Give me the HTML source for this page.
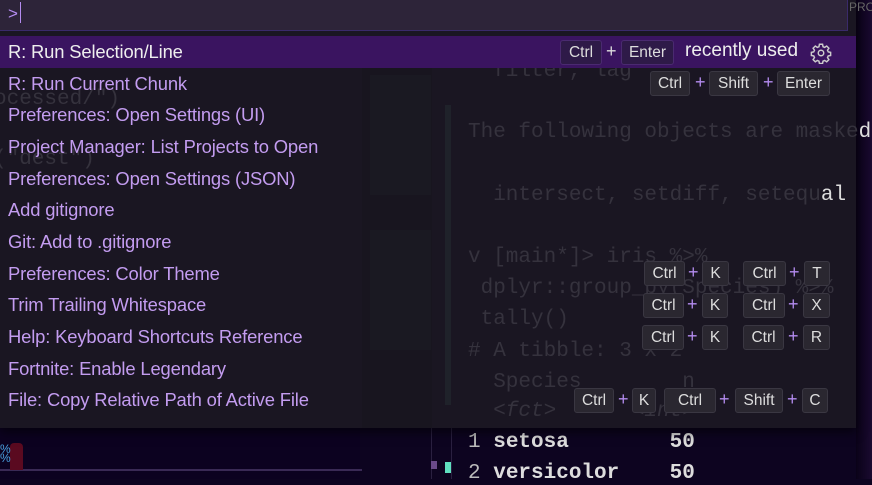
<!DOCTYPE html>
<html><head><meta charset="utf-8"><style>
*{margin:0;padding:0;box-sizing:border-box}
body{width:872px;height:479px;overflow:hidden;background:#0d0420;font-family:"Liberation Sans",sans-serif;position:relative}
.abs{position:absolute}
.pal{position:absolute;left:0;top:0;width:856px;height:428px;background:#1a1622;box-shadow:0 4px 10px rgba(0,0,0,.6)}
.input{position:absolute;left:0;top:0;width:848px;height:31px;background:#2d2439;border-bottom:1px solid #3a2a6a;border-right:1px solid #3a2a6a}
.row{position:absolute;left:8px;font-size:18.4px;color:#c39cf0;white-space:nowrap;letter-spacing:-0.15px}
.sel{position:absolute;left:0;top:36px;width:856px;height:32px;background:#3a1460}
.code{position:absolute;font-family:"Liberation Mono",monospace;font-size:21px;color:#35323d;white-space:pre}
.k{position:absolute;height:25px;background:#2a2730;border:1px solid #3a3742;border-radius:3px;color:#ddd;font-size:15.5px;line-height:23px;text-align:center}
.p{position:absolute;color:#b48cf0;font-size:18px}
.mm{position:absolute;background:#2a3a3a}
</style></head><body>
<div class="abs" style="left:0;top:428px;width:360px;height:51px;background:#0c0220"></div>
<div class="abs" style="left:0;top:469px;width:362px;height:2px;background:#3a2a55"></div>
<div class="abs" style="left:10px;top:443px;width:13px;height:27px;background:#5a0a20;border-radius:4px 4px 0 0"></div>
<div class="abs" style="left:0;top:445px;font-size:12px;color:#4aa0e0;line-height:9px">%<br>%</div>
<div class="abs" style="left:431px;top:428px;width:1px;height:51px;background:#2a2040"></div>
<div class="abs" style="left:451px;top:428px;width:1px;height:51px;background:#2a2040"></div>
<div class="abs" style="left:431px;top:461px;width:6px;height:8px;background:#6a4a8a"></div>
<div class="abs" style="left:445px;top:462px;width:6px;height:11px;background:#60e0c0"></div>
<div class="code" style="left:468px;top:431px;color:#ddd;font-weight:bold"><span style="font-weight:normal;color:#bbb">1</span> setosa        50</div>
<div class="code" style="left:468px;top:462px;color:#ddd;font-weight:bold"><span style="font-weight:normal;color:#bbb">2</span> versicolor    50</div>
<div class="abs" style="left:856px;top:0;width:16px;height:479px;background:linear-gradient(90deg,#0a0218,#1a0a30)"></div>

<div class="pal">
 <div class="abs" style="left:362px;top:68px;width:70px;height:360px;background:#18151f"></div>
 <div class="mm" style="left:370px;top:75px;width:61px;height:120px;opacity:.12"></div>
 <div class="mm" style="left:370px;top:230px;width:61px;height:120px;opacity:.12"></div>
 <div class="mm" style="left:445px;top:105px;width:6px;height:300px;opacity:.35"></div>
 <div class="code" style="left:468px;top:60px">  filter, lag</div>
 <div class="code" style="left:468px;top:121px">The following objects are maske<span style="color:#ddd">d</span></div>
 <div class="code" style="left:468px;top:184px">  intersect, setdiff, setequ<span style="color:#ddd">al</span></div>
 <div class="code" style="left:468px;top:246px">v [main*]&gt; iris %&gt;%</div>
 <div class="code" style="left:468px;top:277px"> dplyr::group_by(Species) %&gt;%</div>
 <div class="code" style="left:468px;top:308px"> tally()</div>
 <div class="code" style="left:468px;top:340px"># A tibble: 3 x 2</div>
 <div class="code" style="left:468px;top:371px">  Species        n</div>
 <div class="code" style="left:468px;top:400px;font-style:italic">  &lt;fct&gt;      &lt;int&gt;</div>
 <div class="code" style="left:-6px;top:88px">ocessed/")</div>
 <div class="code" style="left:-6px;top:148px">("dest")</div>

 <div class="input"><div class="abs" style="left:8px;top:4px;color:#b48cf0;font-size:17px">&gt;</div><div class="abs" style="left:20px;top:2px;width:1px;height:21px;background:#b48cf0"></div></div>
 <div class="sel"></div>
 <div class="row" style="top:41px;color:#eee">R: Run Selection/Line</div>
 <div class="row" style="top:73px">R: Run Current Chunk</div>
 <div class="row" style="top:104px">Preferences: Open Settings (UI)</div>
 <div class="row" style="top:136px">Project Manager: List Projects to Open</div>
 <div class="row" style="top:168px">Preferences: Open Settings (JSON)</div>
 <div class="row" style="top:199px">Add gitignore</div>
 <div class="row" style="top:231px">Git: Add to .gitignore</div>
 <div class="row" style="top:263px">Preferences: Color Theme</div>
 <div class="row" style="top:294px">Trim Trailing Whitespace</div>
 <div class="row" style="top:326px">Help: Keyboard Shortcuts Reference</div>
 <div class="row" style="top:358px">Fortnite: Enable Legendary</div>
 <div class="row" style="top:389px">File: Copy Relative Path of Active File</div>

 <div class="k" style="left:560px;top:40px;width:42px;background:#2e1a48;border-color:#4a2a70">Ctrl</div>
 <div class="p" style="left:606px;top:41px;color:#ddd">+</div>
 <div class="k" style="left:621px;top:40px;width:53px;background:#2e1a48;border-color:#4a2a70">Enter</div>
 <div class="abs" style="left:685px;top:40px;font-size:19px;color:#eee">recently used</div>
 <svg class="abs" style="left:810px;top:42px" width="22" height="22" viewBox="0 0 24 24" fill="none" stroke="#ccc" stroke-width="1.6"><circle cx="12" cy="12" r="3"/><path d="M10.3 2.5h3.4l.5 2.6 1.8.8 2.2-1.5 2.4 2.4-1.5 2.2.8 1.8 2.6.5v3.4l-2.6.5-.8 1.8 1.5 2.2-2.4 2.4-2.2-1.5-1.8.8-.5 2.6h-3.4l-.5-2.6-1.8-.8-2.2 1.5-2.4-2.4 1.5-2.2-.8-1.8-2.6-.5v-3.4l2.6-.5.8-1.8-1.5-2.2 2.4-2.4 2.2 1.5 1.8-.8z"/></svg>
 <div class="k" style="left:650px;top:71px;width:40px">Ctrl</div><div class="p" style="left:695px;top:72px">+</div>
 <div class="k" style="left:709px;top:71px;width:49px">Shift</div><div class="p" style="left:763px;top:72px">+</div>
 <div class="k" style="left:777px;top:71px;width:53px">Enter</div>
 <div class="k" style="left:644px;top:261px;width:41px">Ctrl</div><div class="p" style="left:688px;top:262px">+</div><div class="k" style="left:702px;top:261px;width:27px">K</div>
 <div class="k" style="left:743px;top:261px;width:43px">Ctrl</div><div class="p" style="left:789px;top:262px">+</div><div class="k" style="left:804px;top:261px;width:26px">T</div>
 <div class="k" style="left:643px;top:293px;width:41px">Ctrl</div><div class="p" style="left:687px;top:294px">+</div><div class="k" style="left:702px;top:293px;width:26px">K</div>
 <div class="k" style="left:743px;top:293px;width:42px">Ctrl</div><div class="p" style="left:788px;top:294px">+</div><div class="k" style="left:803px;top:293px;width:27px">X</div>
 <div class="k" style="left:642px;top:325px;width:42px">Ctrl</div><div class="p" style="left:687px;top:326px">+</div><div class="k" style="left:702px;top:325px;width:26px">K</div>
 <div class="k" style="left:743px;top:325px;width:41px">Ctrl</div><div class="p" style="left:788px;top:326px">+</div><div class="k" style="left:803px;top:325px;width:27px">R</div>
 <div class="k" style="left:574px;top:388px;width:40px">Ctrl</div><div class="p" style="left:618px;top:389px">+</div><div class="k" style="left:632px;top:388px;width:24px">K</div>
 <div class="k" style="left:664px;top:388px;width:52px">Ctrl</div><div class="p" style="left:719px;top:389px">+</div><div class="k" style="left:735px;top:388px;width:48px">Shift</div>
 <div class="p" style="left:787px;top:389px">+</div><div class="k" style="left:802px;top:388px;width:26px">C</div>
</div>
<div class="abs" style="left:849px;top:0;font-size:12px;color:#666">PRO</div>
</body></html>
